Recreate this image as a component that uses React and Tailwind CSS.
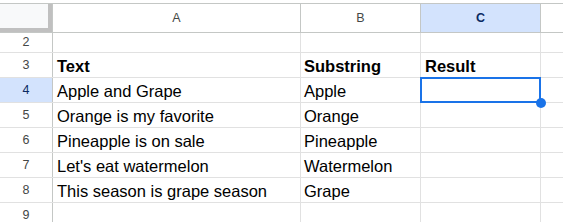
import React from 'react';

const rows = [
  { n: 2, a: '', b: '', h: 'h-[20px]' },
  { n: 3, a: 'Text', b: 'Substring', c: 'Result', bold: true },
  { n: 4, a: 'Apple and Grape', b: 'Apple', sel: true },
  { n: 5, a: 'Orange is my favorite', b: 'Orange' },
  { n: 6, a: 'Pineapple is on sale', b: 'Pineapple' },
  { n: 7, a: "Let's eat watermelon", b: 'Watermelon' },
  { n: 8, a: 'This season is grape season', b: 'Grape' },
  { n: 9, a: '', b: '', h: 'h-[25px]' },
];

export default function App() {
  return (
    <div className="w-[563px] h-[222px] overflow-hidden bg-white pt-[3px] font-['Liberation_Sans',Arial,sans-serif] text-black">
      {/* Column headers */}
      <div className="flex h-[30px] border-y border-[#c4c7c5] text-[12.5px] text-[#444746]">
        <div className="w-[53px] shrink-0 border-r border-[#c4c7c5]">
          <div className="h-full bg-[#f8f9fa] border-r-4 border-b-4 border-[#c0c0c0]" />
        </div>
        <div className="w-[248px] shrink-0 border-r border-[#c4c7c5] flex items-center justify-center">A</div>
        <div className="w-[120px] shrink-0 border-r border-[#c4c7c5] flex items-center justify-center">B</div>
        <div className="w-[120px] shrink-0 border-r border-[#c4c7c5] bg-[#d3e3fd] flex items-center justify-center font-bold text-[#0b2a63]">C</div>
        <div className="flex-1" />
      </div>

      {rows.map((r) => (
        <div
          key={r.n}
          className={`flex ${r.h || 'h-[25px]'} border-b border-[#e1e1e1] text-[16.5px] ${r.bold ? 'font-bold' : ''}`}
        >
          <div
            className={`w-[53px] shrink-0 border-r border-[#c4c7c5] flex items-center justify-center text-[12.5px] font-normal ${
              r.sel ? 'bg-[#d3e3fd] text-[#0b2a63] font-bold' : 'text-[#444746]'
            }`}
          >
            {r.n}
          </div>
          <div className="w-[248px] shrink-0 border-r border-[#e1e1e1] flex items-center pl-[4px] pt-[2px] whitespace-nowrap">{r.a}</div>
          <div className="w-[120px] shrink-0 border-r border-[#e1e1e1] flex items-center pl-[3px] pt-[2px] whitespace-nowrap">{r.b}</div>
          <div className="relative w-[120px] shrink-0 border-r border-[#e1e1e1] flex items-center pl-[4px] pt-[2px] whitespace-nowrap">
            {r.c}
            {r.sel && (
              <>
                <div className="absolute -left-[1px] -top-[1px] -right-[1px] -bottom-[1px] border-2 border-[#1a73e8]" />
                <div className="absolute z-10 -right-[6px] -bottom-[6px] w-[10px] h-[10px] rounded-full bg-[#1a73e8]" />
              </>
            )}
          </div>
          <div className="flex-1" />
        </div>
      ))}
    </div>
  );
}
